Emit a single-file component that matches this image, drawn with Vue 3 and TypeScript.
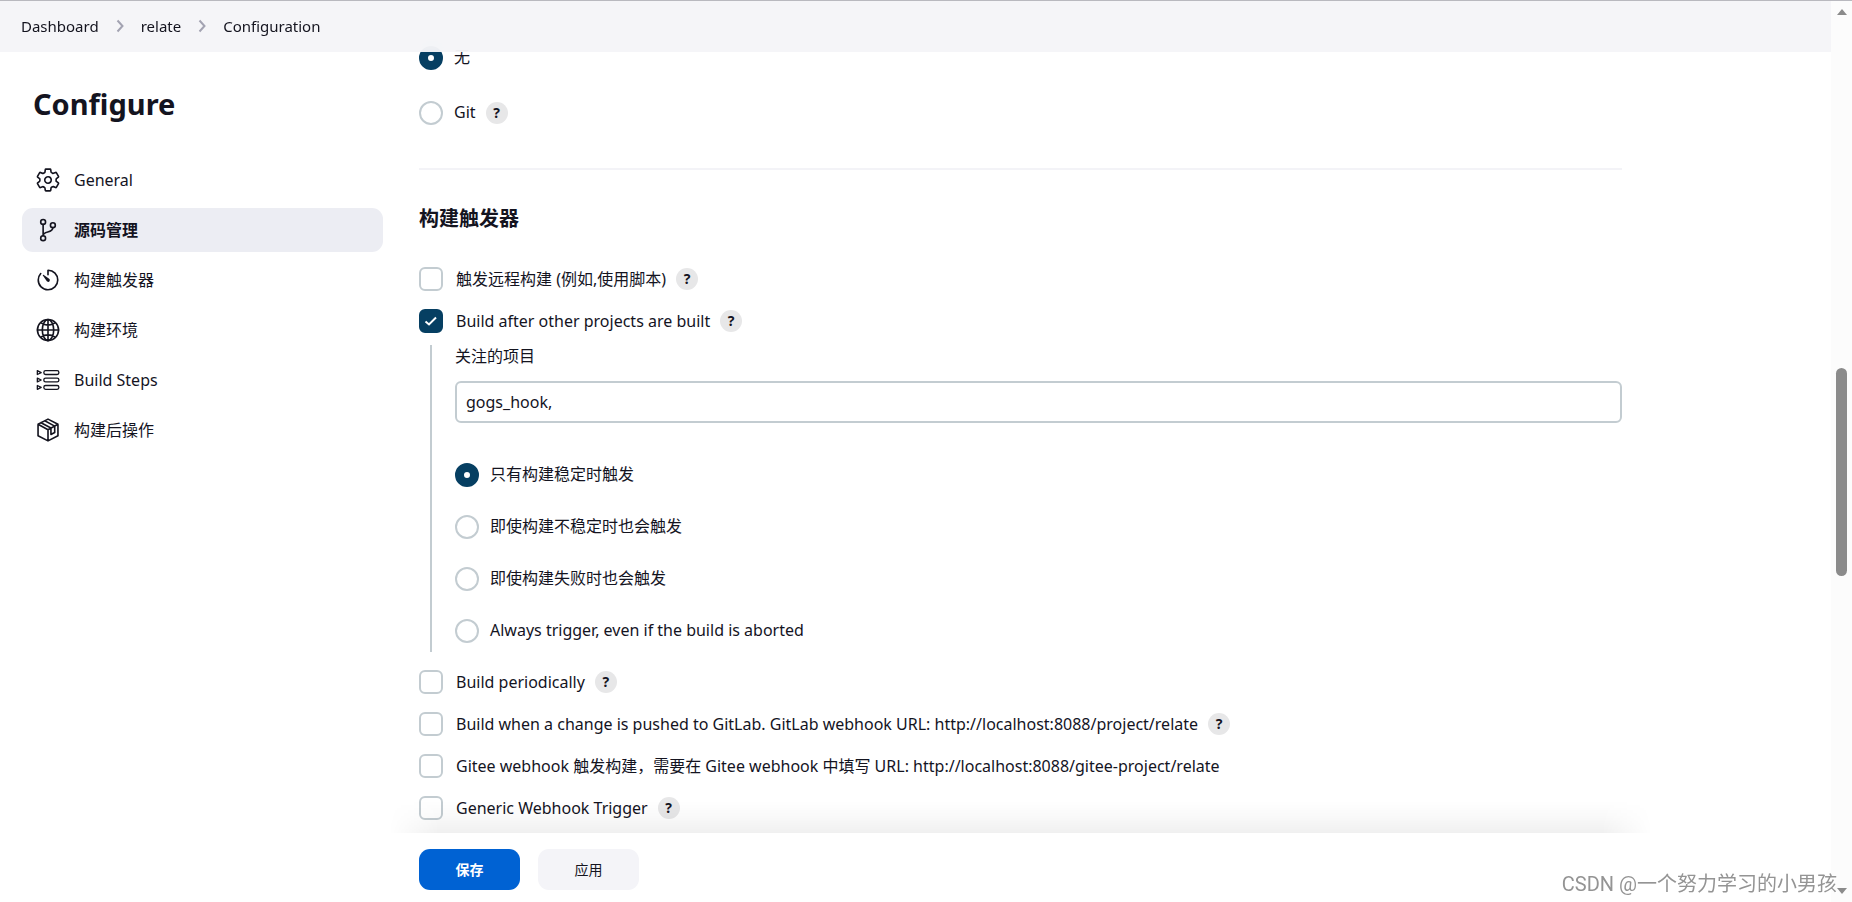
<script setup lang="ts">
import { ref } from 'vue'

interface Trigger {
  id: string
  label: string
  help: boolean
  checked: boolean
}

const crumbs = ['Dashboard', 'relate', 'Configuration']

const sections = [
  { icon: 'gear', label: 'General' },
  { icon: 'branch', label: '源码管理' },
  { icon: 'timer', label: '构建触发器' },
  { icon: 'globe', label: '构建环境' },
  { icon: 'steps', label: 'Build Steps' },
  { icon: 'package', label: '构建后操作' },
]
const active = ref('源码管理')

const scm = ref('none')
const upstream = ref('gogs_hook,')
const threshold = ref('stable')
const thresholds = [
  { value: 'stable', label: '只有构建稳定时触发' },
  { value: 'unstable', label: '即使构建不稳定时也会触发' },
  { value: 'failed', label: '即使构建失败时也会触发' },
  { value: 'aborted', label: 'Always trigger, even if the build is aborted' },
]

const triggers = ref<Trigger[]>([
  { id: 'remote', label: '触发远程构建 (例如,使用脚本)', help: true, checked: false },
  { id: 'after', label: 'Build after other projects are built', help: true, checked: true },
  { id: 'periodic', label: 'Build periodically', help: true, checked: false },
  { id: 'gitlab', label: 'Build when a change is pushed to GitLab. GitLab webhook URL: http://localhost:8088/project/relate', help: true, checked: false },
  { id: 'gitee', label: 'Gitee webhook 触发构建，需要在 Gitee webhook 中填写 URL: http://localhost:8088/gitee-project/relate', help: false, checked: false },
  { id: 'generic', label: 'Generic Webhook Trigger', help: true, checked: false },
])
</script>

<template>
  <div class="page">
    <header class="topbar">
      <nav class="crumbs" aria-label="Breadcrumb">
        <template v-for="(crumb, i) in crumbs" :key="crumb">
          <svg v-if="i > 0" class="chevron" viewBox="0 0 8 14" aria-hidden="true">
            <path d="M1.500 1.500 6.500 7 1.500 12.500" />
          </svg>
          <a href="#">{{ crumb }}</a>
        </template>
      </nav>
    </header>

    <aside class="sidebar">
      <h1>Configure</h1>
      <nav class="sections" aria-label="Sections">
        <a
          v-for="item in sections"
          :key="item.label"
          href="#"
          class="section"
          :class="{ active: active === item.label }"
          @click.prevent="active = item.label"
        >
          <svg class="icon" viewBox="0 0 512 512" aria-hidden="true">
            <g v-if="item.icon === 'gear'">
              <path d="M262.29 192.31a64 64 0 1057.4 57.4 64.13 64.13 0 00-57.4-57.4zM416.39 256a154.34 154.34 0 01-1.53 20.79l45.21 35.46a10.81 10.81 0 012.45 13.75l-42.77 74a10.81 10.81 0 01-13.14 4.59l-44.9-18.08a16.11 16.11 0 00-15.17 1.75A164.48 164.48 0 01325 400.8a15.94 15.94 0 00-8.82 12.14l-6.73 47.89a11.08 11.08 0 01-10.68 9.17h-85.54a11.11 11.11 0 01-10.69-8.87l-6.72-47.82a16.07 16.07 0 00-9-12.22 155.3 155.3 0 01-21.46-12.57 16 16 0 00-15.11-1.71l-44.89 18.07a10.81 10.81 0 01-13.14-4.58l-42.77-74a10.8 10.8 0 012.45-13.75l38.21-30a16.05 16.05 0 006-14.08c-.36-4.17-.58-8.33-.58-12.5s.21-8.27.58-12.35a16 16 0 00-6.07-13.94l-38.19-30A10.81 10.81 0 0149.48 186l42.77-74a10.81 10.81 0 0113.14-4.59l44.9 18.08a16.11 16.11 0 0015.17-1.75A164.48 164.48 0 01187 111.2a15.94 15.94 0 008.82-12.14l6.73-47.89A11.08 11.08 0 01213.23 42h85.54a11.11 11.11 0 0110.69 8.87l6.72 47.82a16.07 16.07 0 009 12.22 155.3 155.3 0 0121.46 12.57 16 16 0 0015.11 1.71l44.89-18.07a10.81 10.81 0 0113.14 4.58l42.77 74a10.8 10.8 0 01-2.45 13.75l-38.21 30a16.05 16.05 0 00-6.05 14.08c.33 4.14.55 8.3.55 12.47z" />
            </g>
            <g v-else-if="item.icon === 'branch'">
              <circle cx="160" cy="96" r="48" />
              <circle cx="160" cy="416" r="48" />
              <circle cx="352" cy="160" r="48" />
              <path d="M160 368V144M352 208c0 128-192 48-192 160" />
            </g>
            <g v-else-if="item.icon === 'timer'">
              <path d="M112.91 128A191.85 191.85 0 0064 254c-1.18 106.35 85.65 193.8 192 194 106.2.2 192-85.83 192-192 0-104.54-83.55-189.61-187.5-192a4.36 4.36 0 00-4.500 4.37V152" />
              <path class="solid" d="M233.38 278.63l-79-113a8.13 8.13 0 0111.32-11.32l113 79a32.5 32.5 0 01-37.25 53.26 33.21 33.21 0 01-8.07-7.94z" />
            </g>
            <g v-else-if="item.icon === 'globe'">
              <circle cx="256" cy="256" r="208" />
              <path d="M256 48c-58.07 0-112.67 93.13-112.67 208S197.93 464 256 464s112.67-93.13 112.67-208S314.07 48 256 48zM117.33 117.33c38.24 27.15 86.38 43.34 138.67 43.34s100.43-16.19 138.67-43.34M394.67 394.67c-38.24-27.15-86.38-43.34-138.67-43.34s-100.43 16.19-138.67 43.34M256 48v416M464 256H48" />
            </g>
            <g v-else-if="item.icon === 'steps'" class="fine">
              <rect x="174" y="72" width="296" height="76" rx="34" />
              <rect x="174" y="218" width="296" height="76" rx="34" />
              <rect x="174" y="364" width="296" height="76" rx="34" />
              <path d="M46 72v76l76-38zM46 218v76l76-38zM46 364v76l76-38z" />
            </g>
            <g v-else>
              <path d="M256 42 452 144V368L256 470 60 368V144zM60 144 256 250 452 144M256 250V470M118 112 314 218V344L388 304V180L192 74" />
            </g>
          </svg>
          <span>{{ item.label }}</span>
        </a>
      </nav>
    </aside>

    <main class="content">
      <div class="scm">
        <div class="row radio-row">
          <input id="scm-none" v-model="scm" type="radio" name="scm" value="none" />
          <label for="scm-none">无</label>
        </div>
        <div class="row radio-row">
          <input id="scm-git" v-model="scm" type="radio" name="scm" value="git" />
          <label for="scm-git">Git</label>
          <button type="button" class="help" aria-label="Help for Git">?</button>
        </div>
      </div>

      <section class="triggers">
        <h2>构建触发器</h2>
        <template v-for="t in triggers" :key="t.id">
          <div class="row check-row">
            <input :id="t.id" v-model="t.checked" type="checkbox" />
            <label :for="t.id">{{ t.label }}</label>
            <button v-if="t.help" type="button" class="help" :aria-label="'Help for ' + t.label">?</button>
          </div>
          <div v-if="t.id === 'after' && t.checked" class="nested">
            <label for="upstream" class="field-label">关注的项目</label>
            <input id="upstream" v-model="upstream" type="text" class="field" />
            <div class="thresholds">
              <div v-for="o in thresholds" :key="o.value" class="row radio-row">
                <input :id="o.value" v-model="threshold" type="radio" name="threshold" :value="o.value" />
                <label :for="o.value">{{ o.label }}</label>
              </div>
            </div>
          </div>
        </template>
      </section>

      <footer class="actions">
        <button type="button" class="btn primary">保存</button>
        <button type="button" class="btn">应用</button>
      </footer>
    </main>

    <div class="scrollbar" aria-hidden="true">
      <span class="arrow up"></span>
      <span class="thumb"></span>
      <span class="arrow down"></span>
    </div>
    <div class="watermark">CSDN @一个努力学习的小男孩</div>
  </div>
</template>

<style>
html,
body {
  margin: 0;
  background: #fff;
}
</style>

<style scoped>
.page {
  display: grid;
  grid-template-columns: 361px minmax(0, 1203px);
  column-gap: 36px;
  box-sizing: border-box;
  min-height: 100vh;
  padding: 0 43px 0 22px;
  color: #14141f;
  font: 16px/24px "Noto Sans", "Noto Sans CJK SC", sans-serif;
}
a {
  color: inherit;
  text-decoration: none;
}
button,
input {
  font: inherit;
  color: inherit;
}

.topbar {
  position: fixed;
  z-index: 3;
  top: 0;
  left: 0;
  right: 21px;
  box-sizing: border-box;
  height: 52px;
  border-top: 1px solid #b9b9bf;
  background: rgba(244, 244, 247, 0.93);
  backdrop-filter: blur(15px);
}
.crumbs {
  display: flex;
  align-items: center;
  gap: 17px;
  height: 50px;
  padding-left: 21px;
  font-size: 15px;
}
.chevron {
  width: 8px;
  height: 14px;
  fill: none;
  stroke: #a3a3b2;
  stroke-width: 2;
}

.sidebar {
  padding-top: 84px;
}
h1 {
  margin: 0 11px 34px;
  font-size: 29px;
  line-height: 40px;
  font-weight: 700;
}
.sections {
  display: flex;
  flex-direction: column;
  gap: 6px;
}
.section {
  display: flex;
  align-items: center;
  gap: 13px;
  height: 44px;
  padding-left: 13px;
  border-radius: 11px;
}
.section.active {
  background: #ecedf3;
  font-weight: 700;
}
.icon {
  width: 26px;
  height: 26px;
  fill: none;
  stroke: #14141f;
  stroke-width: 32;
  stroke-linecap: round;
  stroke-linejoin: round;
}
.icon .solid {
  fill: #14141f;
  stroke: none;
}
.icon .fine {
  stroke-width: 26;
}

.content {
  display: flex;
  flex-direction: column;
  min-width: 0;
  padding-top: 46px;
}
.row {
  display: flex;
  align-items: center;
  min-height: 24px;
}
.row input {
  appearance: none;
  flex: none;
  box-sizing: border-box;
  width: 24px;
  height: 24px;
  margin: 0;
  border: 2px solid #c3ccd1;
  background: #fff;
}
.radio-row input {
  margin-right: 11px;
  border-radius: 50%;
}
.radio-row label {
  line-height: 22px;
  padding-bottom: 2px;
}
.check-row input {
  margin-right: 13px;
  border-radius: 6px;
}
.radio-row input:checked {
  border: 9px solid #063f62;
}
.check-row input:checked {
  border-color: #063f62;
  background: #063f62 url("data:image/svg+xml,%3Csvg xmlns='http://www.w3.org/2000/svg' viewBox='0 0 20 20' fill='none' stroke='white' stroke-width='2'%3E%3Cpath d='M4.500 10.500 8 13.500 15 6.500'/%3E%3C/svg%3E") center / 20px no-repeat;
}
.help {
  width: 22px;
  height: 22px;
  margin-left: 10px;
  padding: 0;
  border: 0;
  border-radius: 50%;
  background: #e7e7e8;
  font-size: 14px;
  line-height: 22px;
  font-weight: 700;
}
.scm {
  display: flex;
  flex-direction: column;
  gap: 31px;
  padding-bottom: 43px;
  border-bottom: 2px solid #f3f3f7;
}
h2 {
  margin: 0 0 15px;
  font-size: 20px;
  line-height: 30px;
  font-weight: 700;
}
.triggers {
  display: flex;
  flex-direction: column;
  gap: 18px;
  padding: 34px 0 13px;
}
.nested {
  display: flex;
  flex-direction: column;
  margin: -6px 0 0 11px;
  padding-left: 23px;
  border-left: 2px solid #c3ccd1;
}
.field-label {
  margin-bottom: 14px;
  line-height: 22px;
}
.field {
  box-sizing: border-box;
  width: 100%;
  height: 42px;
  padding: 0 9px;
  border: 2px solid #c3ccd1;
  border-radius: 6px;
  background: #fff;
}
.thresholds {
  display: flex;
  flex-direction: column;
  gap: 28px;
  padding: 40px 0 9px;
}

.actions {
  position: sticky;
  z-index: 2;
  bottom: 0;
  display: flex;
  gap: 18px;
  padding: 16px 0 13px;
  background: #fff;
}
.actions::before {
  content: "";
  position: absolute;
  bottom: 100%;
  left: -30px;
  right: -30px;
  height: 32px;
  background: linear-gradient(to top, rgba(0, 0, 0, 0.06), rgba(0, 0, 0, 0.025) 50%, transparent);
  mask-image: linear-gradient(to right, transparent, #000 50px, #000 calc(100% - 50px), transparent);
  pointer-events: none;
}
.btn {
  min-width: 101px;
  height: 41px;
  padding: 0 36px;
  border: 0;
  border-radius: 11px;
  background: #f4f4f8;
  font-size: 14px;
}
.btn.primary {
  background: #0062d3;
  color: #fff;
  font-weight: 700;
}

.scrollbar {
  position: fixed;
  z-index: 4;
  top: 0;
  right: 0;
  bottom: 0;
  display: flex;
  flex-direction: column;
  align-items: center;
  justify-content: space-between;
  box-sizing: border-box;
  width: 21px;
  padding: 8px 0;
  border-top: 1px solid #b9b9bf;
  background: #fcfcfc;
}
.thumb {
  width: 11px;
  height: 208px;
  margin-top: 40px;
  border-radius: 6px;
  background: #8b8b8b;
}
.arrow {
  border: 5px solid transparent;
}
.arrow.up {
  border-top: 0;
  border-bottom: 6px solid #8b8b8b;
}
.arrow.down {
  border-bottom: 0;
  border-top: 6px solid #8b8b8b;
}
.watermark {
  position: fixed;
  z-index: 5;
  right: 15px;
  bottom: 3px;
  color: #949494;
  font: 20px/30px Roboto, "Noto Sans CJK SC", sans-serif;
  text-shadow: 1px 1px 0 #fff;
}
</style>
